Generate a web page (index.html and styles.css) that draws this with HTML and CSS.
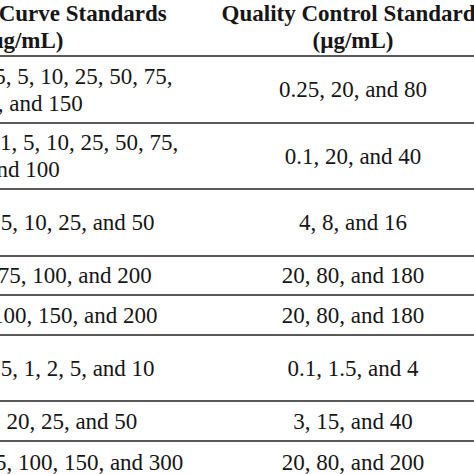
FILE: index.html
```html
<!DOCTYPE html>
<html>
<head>
<meta charset="utf-8">
<link rel="stylesheet" href="styles.css">
</head>
<body>
<div class="table">
  <div class="row head h57">
    <div class="cell c1">Calibration Curve Standards<br>(µg/mL)</div>
    <div class="cell c2">Quality Control Standards<br>(µg/mL)</div>
  </div>
  <div class="row h67">
    <div class="cell c1">0.1, 0.5, 1, 2.5, 5, 10, 25, 50, 75,<br>100, and 150</div>
    <div class="cell c2">0.25, 20, and 80</div>
  </div>
  <div class="row h66">
    <div class="cell c1">0.1, 0.25, 0.5, 1, 5, 10, 25, 50, 75,<br>and 100</div>
    <div class="cell c2">0.1, 20, and 40</div>
  </div>
  <div class="row h67">
    <div class="cell c1">0.25, 0.5, 2.5, 10, 25, and 50</div>
    <div class="cell c2">4, 8, and 16</div>
  </div>
  <div class="row h39">
    <div class="cell c1">10, 25, 50, 75, 100, and 200</div>
    <div class="cell c2">20, 80, and 180</div>
  </div>
  <div class="row h40">
    <div class="cell c1">10, 25, 50, 100, 150, and 200</div>
    <div class="cell c2">20, 80, and 180</div>
  </div>
  <div class="row h66">
    <div class="cell c1">0.1, 0.25, 0.5, 1, 2, 5, and 10</div>
    <div class="cell c2">0.1, 1.5, and 4</div>
  </div>
  <div class="row h40">
    <div class="cell c1">2.5, 5, 10, 20, 25, and 50</div>
    <div class="cell c2">3, 15, and 40</div>
  </div>
  <div class="row h40">
    <div class="cell c1">12.5, 25, 50, 75, 100, 150, and 300</div>
    <div class="cell c2">20, 80, and 200</div>
  </div>
</div>
</body>
</html>
```
FILE: styles.css
```css
html, body {
  margin: 0;
  padding: 0;
  background: #ffffff;
  overflow: hidden;
}
body {
  width: 474px;
  height: 474px;
}
.table {
  margin-left: -200px;
  width: 674px;
  font-family: "Liberation Serif", "Times New Roman", serif;
  font-size: 23px;
  line-height: 27px;
  color: #161616;
}
.row {
  display: grid;
  grid-template-columns: 446px 214px;
  box-sizing: border-box;
  border-bottom: 2px solid #5a5a5a;
}
.row:last-child {
  border-bottom: none;
}
.cell {
  display: flex;
  flex-direction: column;
  justify-content: center;
  align-items: center;
  text-align: center;
  white-space: nowrap;
}
.head .cell {
  font-weight: bold;
  justify-content: flex-end;
  padding-bottom: 5px;
}
.h57 { height: 57px; }
.h67 { height: 67px; }
.h66 { height: 66px; }
.h40 { height: 40px; }
.h39 { height: 39px; }
```
